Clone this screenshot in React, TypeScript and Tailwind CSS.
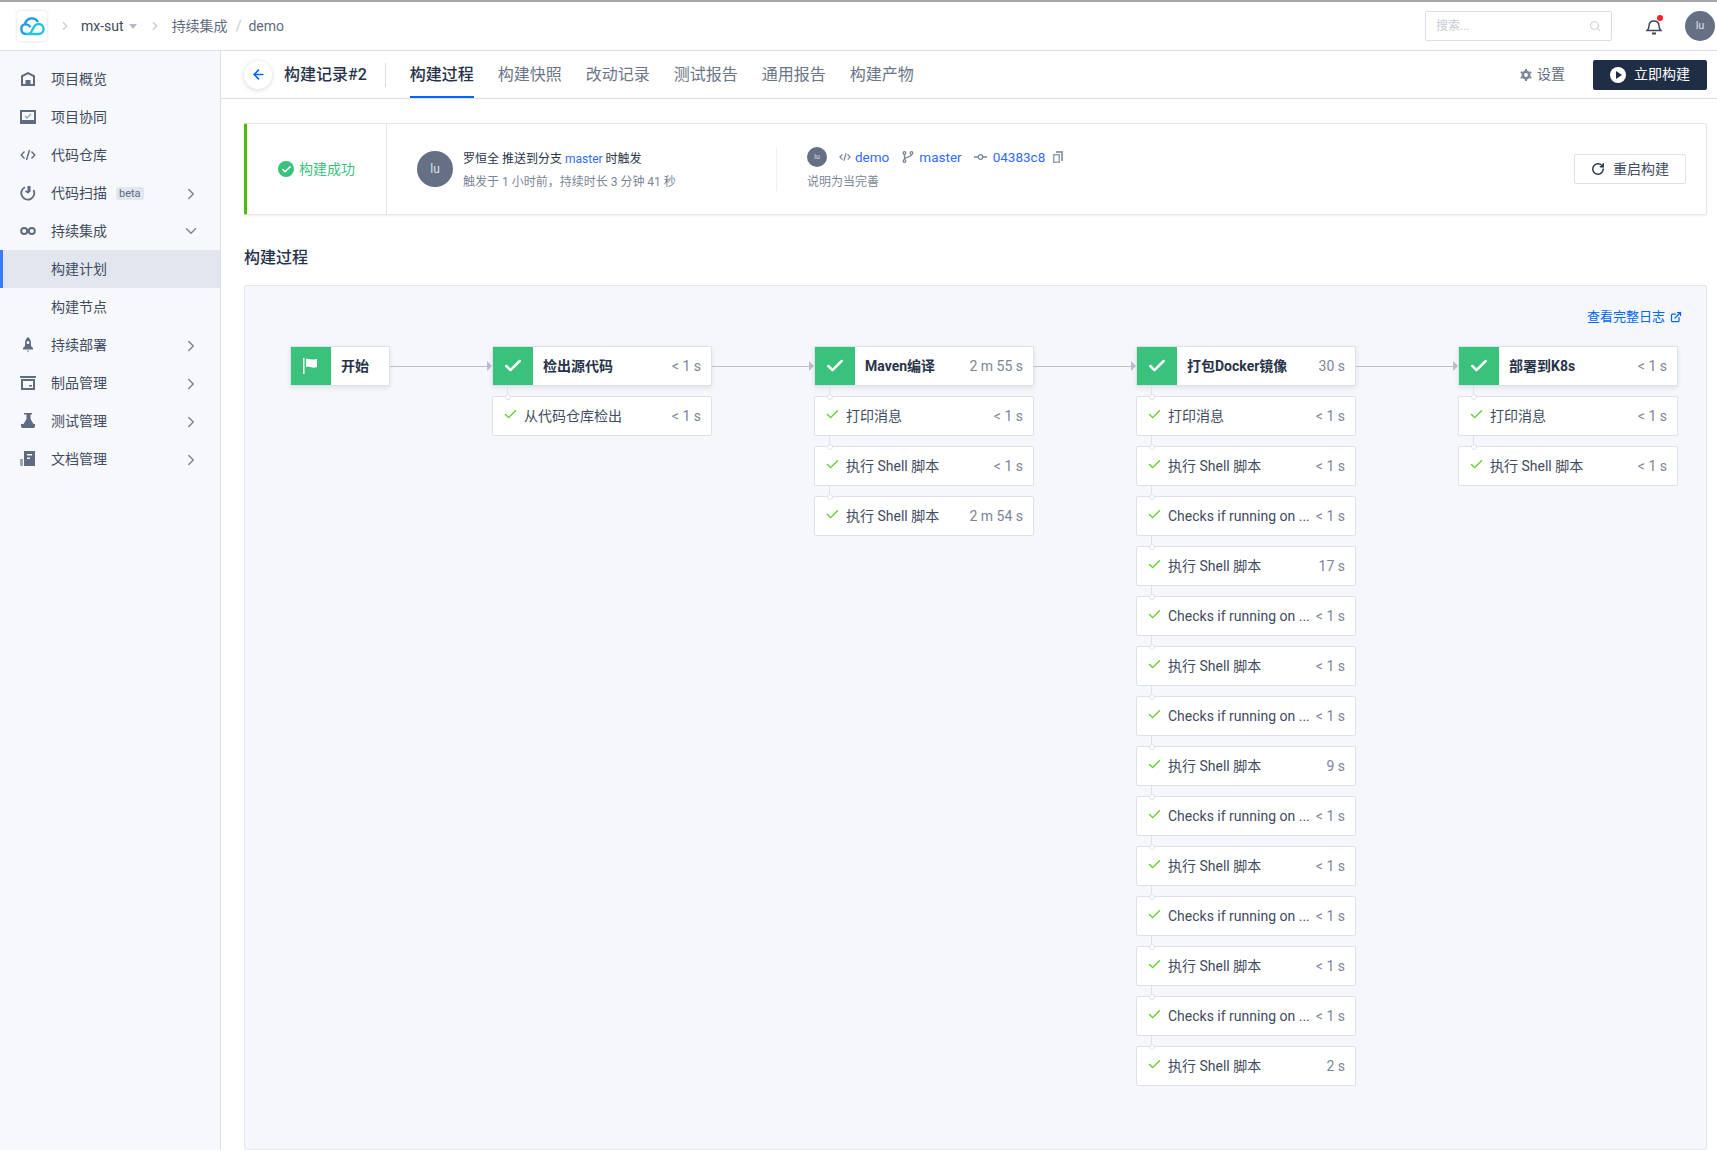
import { ChevronDown, ChevronRight, Check, ArrowLeft, Search, RotateCw, ExternalLink } from "lucide-react"

const font = { fontFamily: 'Roboto, "Noto Sans CJK SC", sans-serif' }

function HomeIcon() {
  return (
    <svg width="16" height="16" viewBox="0 0 16 16" fill="#5f6b80">
      <path fillRule="evenodd" d="M8 1 15 4.500V15H1V4.500L8 1ZM3 5.700V13h2.500V9h5v4H13V5.700L8 3.200 3 5.700Z" />
    </svg>
  )
}
function TaskIcon() {
  return (
    <svg width="16" height="16" viewBox="0 0 16 16">
      <path fill="#5f6b80" fillRule="evenodd" d="M0 1h16v14H0V1Zm2 2v8h12V3H2Z" />
      <path fill="none" stroke="#9aa3b2" strokeWidth="1.3" d="m5 7 2 2 4-4" />
    </svg>
  )
}
function CodeIcon() {
  return (
    <svg width="16" height="16" viewBox="0 0 16 16" fill="none" stroke="#5f6b80" strokeWidth="1.4">
      <path d="M4.500 4.500 1.200 8l3.300 3.500M11.500 4.500 14.800 8l-3.300 3.500M9.500 3 6.500 13" />
    </svg>
  )
}
function ScanIcon() {
  return (
    <svg width="16" height="16" viewBox="0 0 16 16" fill="none" stroke="#5f6b80">
      <path strokeWidth="1.8" d="M5 2.200A6.500 6.500 0 1 0 13.500 5" />
      <path strokeWidth="3" d="M9 1v6" />
      <path strokeWidth="2" d="M9 8 5.500 6" />
    </svg>
  )
}
function InfinityIcon() {
  return (
    <svg width="16" height="16" viewBox="0 0 16 16" fill="none" stroke="#5f6b80" strokeWidth="2">
      <circle cx="4.200" cy="8" r="3" />
      <circle cx="11.800" cy="8" r="3" />
    </svg>
  )
}
function RocketIcon() {
  return (
    <svg width="16" height="16" viewBox="0 0 16 16" fill="#5f6b80">
      <path fillRule="evenodd" d="M8 0c2 1.500 3 3.500 3 6v3l2 2v1.500H3V11l2-2V6c0-2.500 1-4.500 3-6Zm0 4a1.500 1.500 0 1 0 0 3 1.500 1.500 0 0 0 0-3Z" />
      <path d="M6.500 13.500h3L8 15.500z" fill="#9aa3b2" />
    </svg>
  )
}
function BoxIcon() {
  return (
    <svg width="16" height="16" viewBox="0 0 16 16" fill="#5f6b80">
      <path fillRule="evenodd" d="M0 1h16v2H0V1Zm1 3h14v11H1V4Zm2 2v7h10V6H3Zm6 4h3v1.500H9V10Z" />
    </svg>
  )
}
function FlaskIcon() {
  return (
    <svg width="16" height="16" viewBox="0 0 16 16" fill="#5f6b80">
      <path d="M4 0h8v1.500h-1.500V6l3 5H3.500l3-5V1.500H4V0Z" />
      <path d="M1 11h14v2.500l-1 1.500H2l-1-1.500V11Z" fill="#5f6b80" />
    </svg>
  )
}
function DocIcon() {
  return (
    <svg width="16" height="16" viewBox="0 0 16 16" fill="#5f6b80">
      <path fillRule="evenodd" d="M4 0h11v15H4V0Zm3 3v1.500h5V3H7Zm0 3.500V8h3V6.500H7Z" />
      <path d="M0 8h3v7H1l-1-1V8Z" fill="#9aa3b2" />
    </svg>
  )
}
function Logo() {
  return (
    <svg width="26" height="20" viewBox="0 0 26 20" fill="none" strokeWidth="2.4">
      <path stroke="#1f9cf0" d="M7 18a5 5 0 0 1-1-9.800A7 7 0 0 1 19 6" />
      <path stroke="#1fc6e0" d="M7 18h12.500a5 5 0 1 0-4.500-7l-2 3.500A5 5 0 0 1 7 18Z" />
      <path stroke="#1f9cf0" d="M6 8.500c2-.5 4 .5 5.500 2.500" />
    </svg>
  )
}
function Flag() {
  return (
    <svg width="18" height="18" viewBox="0 0 18 18" fill="#fff">
      <rect x="1" y="1" width="1.500" height="16" />
      <path d="M4 2c3-1 5 1 8 .5 1.200-.2 2-.4 3-.5v8c-2 .8-4 .8-6 .2-2-.6-3.500-.6-5-.2V2Z" />
    </svg>
  )
}
function GitIcon() {
  return (
    <svg width="12" height="12" viewBox="0 0 12 12" fill="none" stroke="#7b8698" strokeWidth="1.300">
      <circle cx="2.500" cy="2" r="1.300" />
      <circle cx="2.500" cy="10" r="1.300" />
      <circle cx="9.500" cy="2" r="1.300" />
      <path d="M2.500 3.500v5M9.500 3.500c0 3-7 2-7 5" />
    </svg>
  )
}
function CommitIcon() {
  return (
    <svg width="13" height="12" viewBox="0 0 13 12" fill="none" stroke="#7b8698" strokeWidth="1.300">
      <circle cx="6.500" cy="6" r="2.300" />
      <path d="M0 6h4M9 6h4" />
    </svg>
  )
}
function CopyIcon() {
  return (
    <svg width="10" height="12" viewBox="0 0 10 12" fill="#98a1b0">
      <path fillRule="evenodd" d="M3 0h7v10H8V2H3V0ZM0 3h7v9H0V3Zm1.500 1.500v6h4v-6h-4Z" />
    </svg>
  )
}
function Gear() {
  return (
    <svg width="12" height="12" viewBox="0 0 12 12">
      <circle cx="6" cy="6" r="3.200" fill="none" stroke="#7b8698" strokeWidth="2.600" />
      <path stroke="#7b8698" strokeWidth="2" d="M6 0v2M6 10v2M.8 3l1.700 1M9.500 8l1.700 1M.8 9l1.700-1M9.500 4l1.700-1" />
    </svg>
  )
}
function Bell() {
  return (
    <svg width="16" height="18" viewBox="0 0 16 18" fill="none" stroke="#3c4858" strokeWidth="1.500">
      <path d="M1 13.500c1.500-1 2-2 2-4.500 0-3 2-5 5-5s5 2 5 5c0 2.500.5 3.500 2 4.500H1Z" />
      <path d="M6 16.500h4" strokeWidth="2" />
    </svg>
  )
}

type NavItem = {
  label: string
  icon?: React.ReactNode
  arrow?: "right" | "down"
  beta?: boolean
  active?: boolean
}

const nav: NavItem[] = [
  { label: "项目概览", icon: <HomeIcon /> },
  { label: "项目协同", icon: <TaskIcon /> },
  { label: "代码仓库", icon: <CodeIcon /> },
  { label: "代码扫描", icon: <ScanIcon />, arrow: "right", beta: true },
  { label: "持续集成", icon: <InfinityIcon />, arrow: "down" },
  { label: "构建计划", active: true },
  { label: "构建节点" },
  { label: "持续部署", icon: <RocketIcon />, arrow: "right" },
  { label: "制品管理", icon: <BoxIcon />, arrow: "right" },
  { label: "测试管理", icon: <FlaskIcon />, arrow: "right" },
  { label: "文档管理", icon: <DocIcon />, arrow: "right" },
]

type Step = { name: string; time: string }

const shell = "执行 Shell 脚本"
const checks = "Checks if running on ..."

const stages: { name: string; time: string; steps: Step[] }[] = [
  { name: "检出源代码", time: "< 1 s", steps: [{ name: "从代码仓库检出", time: "< 1 s" }] },
  {
    name: "Maven编译",
    time: "2 m 55 s",
    steps: [
      { name: "打印消息", time: "< 1 s" },
      { name: shell, time: "< 1 s" },
      { name: shell, time: "2 m 54 s" },
    ],
  },
  {
    name: "打包Docker镜像",
    time: "30 s",
    steps: [
      { name: "打印消息", time: "< 1 s" },
      { name: shell, time: "< 1 s" },
      { name: checks, time: "< 1 s" },
      { name: shell, time: "17 s" },
      { name: checks, time: "< 1 s" },
      { name: shell, time: "< 1 s" },
      { name: checks, time: "< 1 s" },
      { name: shell, time: "9 s" },
      { name: checks, time: "< 1 s" },
      { name: shell, time: "< 1 s" },
      { name: checks, time: "< 1 s" },
      { name: shell, time: "< 1 s" },
      { name: checks, time: "< 1 s" },
      { name: shell, time: "2 s" },
    ],
  },
  {
    name: "部署到K8s",
    time: "< 1 s",
    steps: [
      { name: "打印消息", time: "< 1 s" },
      { name: shell, time: "< 1 s" },
    ],
  },
]

function Connector() {
  return (
    <div className="flex h-10 w-[102px] shrink-0 items-center">
      <div className="h-px flex-1 bg-[#b9c0cd]" />
      <div className="h-0 w-0 border-y-[5px] border-l-[5px] border-y-transparent border-l-[#b9c0cd]" />
    </div>
  )
}

function StepRow({ step }: { step: Step }) {
  return (
    <div className="relative mt-2.5 flex h-10 w-[220px] items-center rounded-[2px] border border-[#dde1ea] bg-white pr-[10px] pl-[10px] text-[14px] text-[#3f4b60]">
      <div className="absolute -top-[11px] left-[14px] h-[11px] w-px bg-[#dde1ea]" />
      <div className="absolute -top-[3px] left-3 h-[6px] w-[6px] rounded-full border border-[#dde1ea] bg-white" />
      <Check size={15} strokeWidth={2.25} className="mb-1 shrink-0 text-[#5fd02a]" />
      <span className="mt-px ml-[6px] whitespace-nowrap">{step.name}</span>
      <span className="mt-px ml-auto shrink-0 text-[#7b8698]">{step.time}</span>
    </div>
  )
}

function StageColumn({ stage }: { stage: (typeof stages)[number] }) {
  return (
    <div className="flex w-[220px] shrink-0 flex-col">
      <div className="flex h-10 items-center rounded-[2px] border border-[#dde1ea] bg-white pr-[10px] text-[14px] shadow-[0_2px_5px_rgba(40,50,80,0.1)]">
        <div className="flex h-full w-10 items-center justify-center bg-[#3ac17c]">
          <Check size={20} strokeWidth={3} className="text-white" />
        </div>
        <span className="mt-px ml-2.5 font-bold text-[#28334a]">{stage.name}</span>
        <span className="mt-px ml-auto text-[#7b8698]">{stage.time}</span>
      </div>
      {stage.steps.map((s, i) => (
        <StepRow key={i} step={s} />
      ))}
    </div>
  )
}

export default function App() {
  return (
    <div className="flex h-[1150px] w-[1717px] flex-col overflow-hidden border-t-2 border-[#a8a8a8] bg-white" style={font}>
      {/* top bar */}
      <header className="flex h-[49px] shrink-0 items-center border-b border-[#dbe0e8] pr-0.5 pl-[17px] text-[14px] text-[#5f6b80]">
        <div className="flex h-[30px] w-[30px] items-center justify-center rounded-[4px] bg-white shadow-[0_0_3px_rgba(40,50,80,0.2)]">
          <Logo />
        </div>
        <ChevronRight size={14} className="ml-[11px] text-[#c5cad4]" />
        <span className="ml-[9px] text-[#3f4b60]">mx-sut</span>
        <div className="mt-px ml-[5px] h-0 w-0 border-x-4 border-t-[5px] border-x-transparent border-t-[#b5bbc6]" />
        <ChevronRight size={14} className="ml-[11px] text-[#c5cad4]" />
        <span className="ml-[10px]">持续集成</span>
        <span className="mr-[7px] ml-2 text-[#c5cad4]">/</span>
        <span>demo</span>
        <div className="ml-auto flex h-[30px] w-[187px] items-center justify-between rounded-[2px] border border-[#dbe0e8] pr-[10px] pl-[10px] text-[12px] text-[#c8ccd4]">
          搜索...
          <Search size={12} />
        </div>
        <div className="relative mr-[23px] ml-[34px]">
          <Bell />
          <div className="absolute -top-0.5 right-[-1px] h-[6px] w-[6px] rounded-full bg-[#ff1f1f]" />
        </div>
        <div className="flex h-[30px] w-[30px] items-center justify-center rounded-full bg-[#667085] text-[11px] text-[#dde1e8]">lu</div>
      </header>

      <div className="flex min-h-0 flex-1">
        {/* sidebar */}
        <aside className="w-[221px] shrink-0 border-r border-[#dbe0e8] bg-[#f6f8fb] pt-[9px] text-[14px] text-[#3f4b60]">
          {nav.map((item) => (
            <div
              key={item.label}
              className={
                item.active
                  ? "flex h-[38px] items-center border-l-[3px] border-[#3a7cff] bg-[#e1e6ef] pl-[48px]"
                  : "flex h-[38px] items-center pr-[20px] pl-5"
              }
            >
              {item.icon && <span className="mr-[15px] flex w-4 justify-center">{item.icon}</span>}
              {!item.icon && !item.active && <span className="ml-[31px]" />}
              <span>{item.label}</span>
              {item.beta && (
                <span className="ml-[9px] rounded-[2px] bg-[#e1e6ef] px-[3px] text-[11px] leading-[13px] text-[#5f6b80]">beta</span>
              )}
              {item.arrow === "right" && <ChevronRight size={18} className="mt-0.5 ml-auto text-[#7b8698]" />}
              {item.arrow === "down" && <ChevronDown size={18} className="ml-auto text-[#7b8698]" />}
            </div>
          ))}
        </aside>

        {/* main */}
        <main className="flex min-w-0 flex-1 flex-col">
          <div className="flex h-[48px] shrink-0 items-center border-b border-[#dbe0e8] pr-2.5 pl-[23px]">
            <div className="flex h-7 w-7 items-center justify-center rounded-full bg-white shadow-[0_1px_5px_rgba(40,50,80,0.2)]">
              <ArrowLeft size={15} strokeWidth={2.5} className="text-[#0066ff]" />
            </div>
            <span className="ml-[12px] text-[16px] font-medium text-[#28334a]">构建记录#2</span>
            <div className="mr-6 ml-[18px] h-6 w-px bg-[#dbe0e8]" />
            <div className="flex h-full gap-6 text-[16px] text-[#6b7688]">
              <div className="flex items-center border-y-2 border-t-transparent border-b-[#0066ff] font-medium text-[#28334a]">构建过程</div>
              <div className="flex items-center">构建快照</div>
              <div className="flex items-center">改动记录</div>
              <div className="flex items-center">测试报告</div>
              <div className="flex items-center">通用报告</div>
              <div className="flex items-center">构建产物</div>
            </div>
            <div className="ml-auto flex items-center gap-[5px] text-[14px] text-[#5f6b80]">
              <Gear />
              设置
            </div>
            <div className="ml-7 flex h-[30px] w-[114px] items-center justify-center gap-2 rounded-[2px] bg-[#1f2d45] text-[14px] text-white">
              <div className="flex h-4 w-4 items-center justify-center rounded-full bg-white">
                <div className="ml-0.5 h-0 w-0 border-y-4 border-l-[6px] border-y-transparent border-l-[#1f2d45]" />
              </div>
              立即构建
            </div>
          </div>

          <div className="flex min-h-0 flex-1 flex-col pt-6 pr-[10px] pl-[23px]">
            {/* summary card */}
            <div className="flex h-[92px] shrink-0 items-stretch rounded-[2px] border border-l-[3px] border-[#e4e7ee] border-l-[#4fba0b] bg-white shadow-[0_1px_2px_rgba(40,50,80,0.08)]">
              <div className="flex w-[140px] items-center justify-center gap-[5px] border-r border-[#e4e7ee] text-[14px] text-[#3ac17c]">
                <div className="flex h-4 w-4 items-center justify-center rounded-full bg-[#3ac17c]">
                  <Check size={11} strokeWidth={3.5} className="text-white" />
                </div>
                构建成功
              </div>
              <div className="flex w-[389px] items-center pl-[30px]">
                <div className="flex h-9 w-9 items-center justify-center rounded-full bg-[#667085] text-[12px] text-[#dde1e8]">lu</div>
                <div className="mt-0.5 ml-[10px] text-[12px]">
                  <div className="leading-[18px] text-[#28334a]">
                    罗恒全 推送到分支 <span className="text-[#2f6bff]">master</span> 时触发
                  </div>
                  <div className="mt-[5px] leading-[18px] text-[#7b8698]">触发于 1 小时前，持续时长 3 分钟 41 秒</div>
                </div>
              </div>
              <div className="my-[23px] w-px bg-[#eef0f4]" />
              <div className="flex flex-col justify-center pl-[30px]">
                <div className="flex items-center text-[13.5px] text-[#2f6bff]">
                  <div className="mr-[12px] flex h-5 w-5 items-center justify-center rounded-full bg-[#667085] text-[7px] text-[#dde1e8]">lu</div>
                  <svg width="12" height="12" viewBox="0 0 16 16" fill="none" stroke="#7b8698" strokeWidth="1.600" className="mr-1">
                    <path d="M4.500 4.500 1.200 8l3.300 3.500M11.500 4.500 14.800 8l-3.300 3.500M9.500 3 6.500 13" />
                  </svg>
                  demo
                  <span className="mr-[5px] ml-[13px]"><GitIcon /></span>
                  master
                  <span className="mr-[6px] ml-3"><CommitIcon /></span>
                  04383c8
                  <span className="ml-2"><CopyIcon /></span>
                </div>
                <div className="mt-[6px] text-[12px] leading-[18px] text-[#7b8698]">说明为当完善</div>
              </div>
              <div className="ml-auto flex items-center pr-5">
                <div className="flex h-[30px] w-[112px] items-center justify-center gap-[8px] rounded-[2px] border border-[#dde1ea] text-[14px] text-[#3f4b60]">
                  <RotateCw size={14} strokeWidth={2.5} className="text-[#28334a]" />
                  重启构建
                </div>
              </div>
            </div>

            <h2 className="mt-[31px] shrink-0 text-[16px] leading-6 font-medium text-[#28334a]">构建过程</h2>

            {/* pipeline */}
            <div className="mt-[15px] flex-1 rounded-[2px] border border-[#e4e7ee] bg-[#f5f7fb] pt-[20px] pr-[24px] pl-[46px]">
              <div className="flex items-center justify-end gap-[5px] text-[13px] leading-[22px] text-[#0066ff]">
                查看完整日志
                <ExternalLink size={12} strokeWidth={2.5} />
              </div>
              <div className="mt-[18px] -ml-px flex items-start">
                <div className="flex h-10 w-[100px] shrink-0 items-center rounded-[2px] border border-[#dde1ea] bg-white text-[14px] font-bold text-[#28334a] shadow-[0_2px_5px_rgba(40,50,80,0.1)]">
                  <div className="flex h-full w-10 items-center justify-center bg-[#3ac17c]">
                    <Flag />
                  </div>
                  <span className="mt-px ml-2.5">开始</span>
                </div>
                {stages.map((stage) => (
                  <div key={stage.name} className="flex items-start">
                    <Connector />
                    <StageColumn stage={stage} />
                  </div>
                ))}
              </div>
            </div>
          </div>
        </main>
      </div>
    </div>
  )
}
